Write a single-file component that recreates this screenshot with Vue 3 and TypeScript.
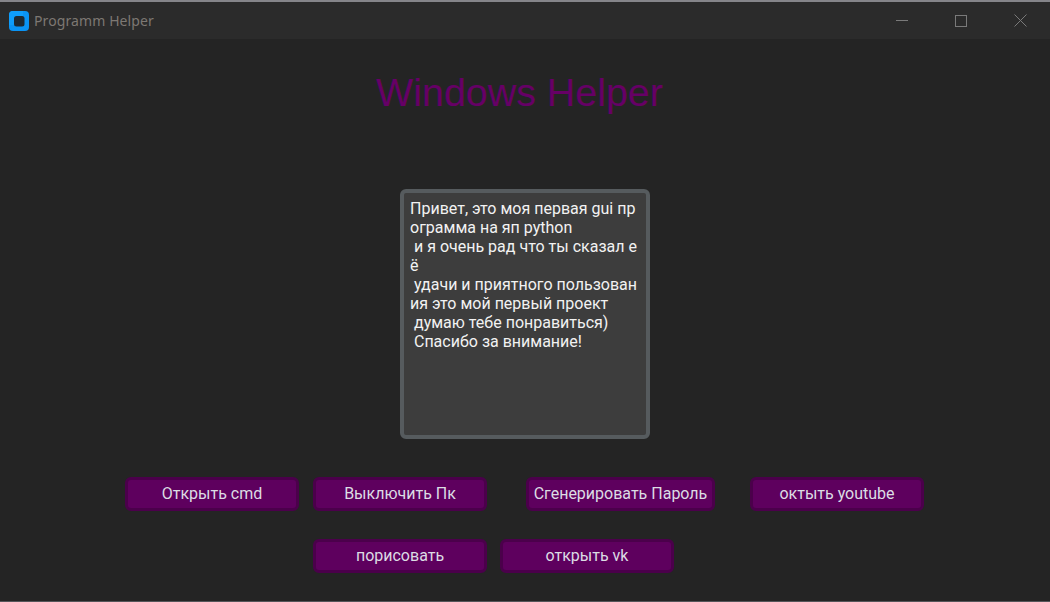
<script setup lang="ts">
const lines: string[] = [
  'Привет, это моя первая gui пр',
  'ограмма на яп python',
  ' и я очень рад что ты сказал е',
  'ё',
  ' удачи и приятного пользован',
  'ия это мой первый проект',
  ' думаю тебе понравиться)',
  ' Спасибо за внимание!',
]
const firstRow = [
  { label: 'Открыть cmd', cls: 'a' },
  { label: 'Выключить Пк', cls: 'b' },
  { label: 'Сгенерировать Пароль', cls: 'c' },
  { label: 'октыть youtube', cls: 'd' },
]
const secondRow = [
  { label: 'порисовать', cls: 'e' },
  { label: 'открыть vk', cls: 'f' },
]
</script>

<template>
  <div class="window">
    <header class="titlebar">
      <div class="brand">
        <svg class="logo" width="20" height="20" viewBox="0 0 20 20">
          <rect x="0" y="0" width="20" height="20" rx="4" fill="#0a94f5" />
          <path d="M0 4a4 4 0 0 1 4-4H14V5H8a3 3 0 0 0-3 3V14H0Z" fill="#0f9dfb" />
          <rect x="5" y="5" width="10.5" height="10.5" rx="2.5" fill="#1e2a33" />
        </svg>
        <span class="app-name">Programm Helper</span>
      </div>
      <div class="controls">
        <svg class="ctl" width="12" height="12" viewBox="0 0 12 12"><path d="M0 5.5H12" stroke="#7a7a7a" fill="none" /></svg>
        <svg class="ctl" width="12" height="12" viewBox="0 0 12 12"><rect x="0.5" y="0.5" width="11" height="11" stroke="#7a7a7a" fill="none" /></svg>
        <svg class="ctl" width="13" height="13" viewBox="0 0 13 13"><path d="M0.5 0.5L12.5 12.5M12.5 0.5L0.5 12.5" stroke="#7a7a7a" fill="none" /></svg>
      </div>
    </header>
    <main class="content">
      <h1 class="title">Windows Helper</h1>
      <div class="textbox">
        <div v-for="(line, i) in lines" :key="i" class="line">{{ line }}</div>
      </div>
      <div class="row row-one">
        <button v-for="b in firstRow" :key="b.label" class="btn" :class="b.cls">{{ b.label }}</button>
      </div>
      <div class="row row-two">
        <button v-for="b in secondRow" :key="b.label" class="btn" :class="b.cls">{{ b.label }}</button>
      </div>
    </main>
  </div>
</template>

<style>
html, body { margin: 0; background: #242424; }
</style>

<style scoped>
.window {
  width: 1050px;
  height: 602px;
  box-sizing: border-box;
  overflow: hidden;
  background: #242424;
  border-top: 2px solid #85858a;
  border-bottom: 1px solid #55565a;
  display: flex;
  flex-direction: column;
}
.titlebar {
  height: 37px;
  flex: none;
  background: #2b2b2b;
  display: flex;
  align-items: center;
  justify-content: space-between;
  padding: 0 23px 0 9px;
}
.brand {
  display: flex;
  align-items: center;
  gap: 5px;
}
.logo { display: block; }
.app-name {
  font-family: "Noto Sans", "Open Sans", sans-serif;
  font-size: 14px;
  color: #7d7873;
  letter-spacing: 0.1px;
}
.controls {
  display: flex;
  align-items: center;
  gap: 47px;
}
.ctl { display: block; }
.content {
  flex: 1;
  display: flex;
  flex-direction: column;
}
.title {
  margin: 30px 0 0;
  height: 46px;
  font-family: "Liberation Sans", Arial, sans-serif;
  font-weight: 400;
  font-size: 39.4px;
  line-height: 46px;
  color: #660066;
  text-align: center;
  padding-right: 11px;
}
.textbox {
  margin: 74px 0 0 400px;
  width: 250px;
  height: 250px;
  box-sizing: border-box;
  border: 4px solid #565b5e;
  border-radius: 6px;
  background: #3d3d3d;
  padding: 6px 6px;
  font-family: Roboto, sans-serif;
  font-size: 16px;
  line-height: 19px;
  color: #f2f2f2;
}
.line { white-space: pre; }
.row { display: flex; }
.row-one { margin: 38px 0 0 125px; }
.row-two { margin: 28px 0 0 313px; }
.btn {
  width: 174px;
  height: 34px;
  box-sizing: border-box;
  padding: 0 0 2px;
  border: 3px solid #4b004b;
  border-radius: 6px;
  background: #5e005e;
  font-family: Roboto, sans-serif;
  font-size: 16px;
  color: #dcdce4;
  white-space: nowrap;
}
.b { margin-left: 14px; }
.c { margin-left: 39px; width: 189px; }
.d { margin-left: 35px; }
.f { margin-left: 13px; }
</style>
